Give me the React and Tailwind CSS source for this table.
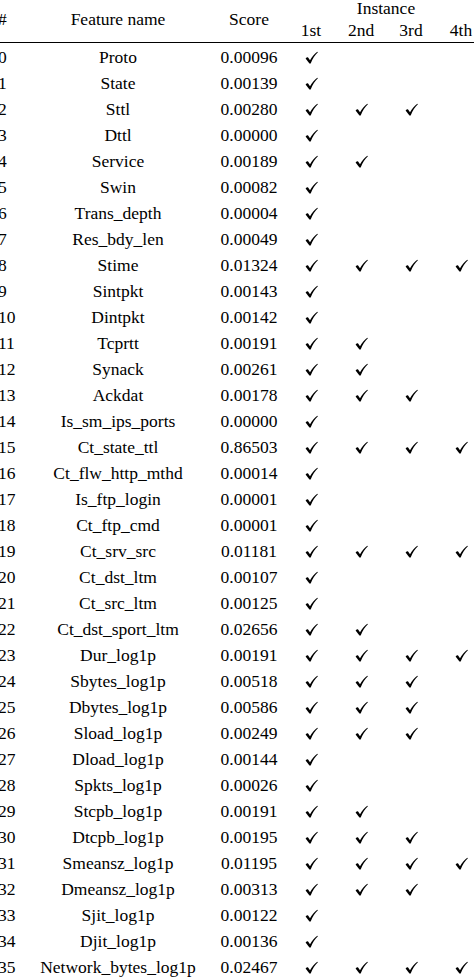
import React from 'react';

const rows = [
  ['Proto', '0.00096', 1],
  ['State', '0.00139', 1],
  ['Sttl', '0.00280', 3],
  ['Dttl', '0.00000', 1],
  ['Service', '0.00189', 2],
  ['Swin', '0.00082', 1],
  ['Trans_depth', '0.00004', 1],
  ['Res_bdy_len', '0.00049', 1],
  ['Stime', '0.01324', 4],
  ['Sintpkt', '0.00143', 1],
  ['Dintpkt', '0.00142', 1],
  ['Tcprtt', '0.00191', 2],
  ['Synack', '0.00261', 2],
  ['Ackdat', '0.00178', 3],
  ['Is_sm_ips_ports', '0.00000', 1],
  ['Ct_state_ttl', '0.86503', 4],
  ['Ct_flw_http_mthd', '0.00014', 1],
  ['Is_ftp_login', '0.00001', 1],
  ['Ct_ftp_cmd', '0.00001', 1],
  ['Ct_srv_src', '0.01181', 4],
  ['Ct_dst_ltm', '0.00107', 1],
  ['Ct_src_ltm', '0.00125', 1],
  ['Ct_dst_sport_ltm', '0.02656', 2],
  ['Dur_log1p', '0.00191', 4],
  ['Sbytes_log1p', '0.00518', 3],
  ['Dbytes_log1p', '0.00586', 3],
  ['Sload_log1p', '0.00249', 3],
  ['Dload_log1p', '0.00144', 1],
  ['Spkts_log1p', '0.00026', 1],
  ['Stcpb_log1p', '0.00191', 2],
  ['Dtcpb_log1p', '0.00195', 3],
  ['Smeansz_log1p', '0.01195', 4],
  ['Dmeansz_log1p', '0.00313', 3],
  ['Sjit_log1p', '0.00122', 1],
  ['Djit_log1p', '0.00136', 1],
  ['Network_bytes_log1p', '0.02467', 4],
];

// calligraphic tick, thick at the foot
const Check = () => (
  <svg width="13" height="13" viewBox="0 0 13 13" className="block">
    <path
      d="M0.6 7.4 C1.4 6.6 2.3 6.2 3.1 6.4 L5.0 9.2 C7.0 5.8 9.4 2.8 12.3 0.7 L12.9 1.3 C10.0 4.0 7.6 7.7 5.7 12.5 L4.4 12.5 Z"
      fill="#000"
    />
  </svg>
);

const grid = 'grid grid-cols-[40px_160px_88px_50px_50px_50px_50px]';

export default function App() {
  return (
    <div className="w-[474px] h-[978px] overflow-hidden bg-white text-black font-['Liberation_Serif',serif] text-[17.5px]">
      <div className="w-[488px] -ml-[2px]">
        {/* header */}
        <div className={`${grid} grid-rows-[18px_24px] border-b border-black`}>
          <div className="row-span-2 flex items-center pb-[4px]">#</div>
          <div className="row-span-2 flex items-center justify-center pb-[4px]">Feature name</div>
          <div className="row-span-2 flex items-center justify-center pb-[4px] pl-[22px] pr-[8px]">Score</div>
          <div className="col-span-4 flex items-center justify-center leading-none">Instance</div>
          <div className="flex items-center justify-center">1st</div>
          <div className="flex items-center justify-center">2nd</div>
          <div className="flex items-center justify-center">3rd</div>
          <div className="flex items-center justify-center">4th</div>
        </div>
        {/* body */}
        <div className="pt-[1px]">
          {rows.map(([name, score, n], i) => (
            <div key={i} className={`${grid} h-[26px] items-center`}>
              <div>{i}</div>
              <div className="text-center whitespace-nowrap">{name}</div>
              <div className="text-center pl-[22px] pr-[8px]">{score}</div>
              {[1, 2, 3, 4].map((k) => (
                <div key={k} className="flex justify-center">
                  {k <= n ? <Check /> : null}
                </div>
              ))}
            </div>
          ))}
        </div>
      </div>
    </div>
  );
}
